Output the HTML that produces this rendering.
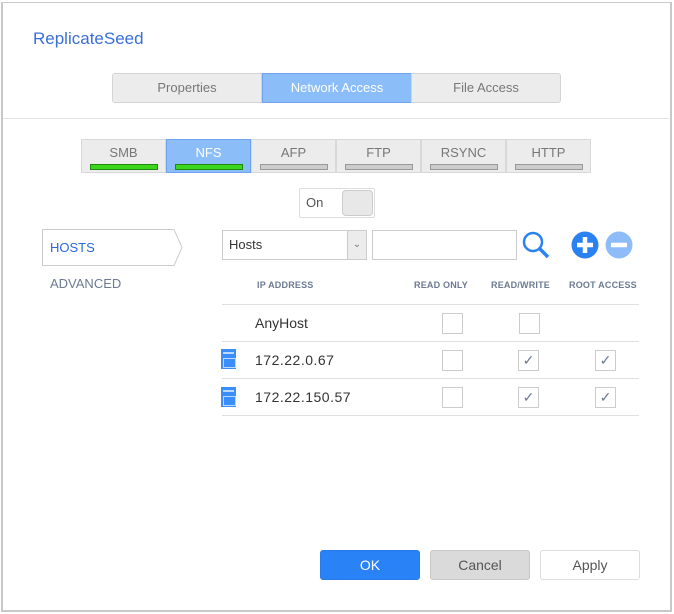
<!DOCTYPE html>
<html><head><style>
*{box-sizing:border-box;margin:0;padding:0}
body{width:674px;height:614px;background:#fff;font-family:"Liberation Sans",sans-serif;position:relative;overflow:hidden}
.a{position:absolute}
.dlg{left:1px;top:2px;width:671px;height:610px;border:2px solid #c8c8c8;border-top:1px solid #ccc;background:#fff}
.tab{top:73px;height:30px;width:150px;background:#ececec;border:1px solid #d4d4d4;color:#777;font-size:13px;text-align:center;line-height:28px}
.pt{top:139px;height:34px;width:85px;background:#ececec;border:1px solid #d8d8d8;color:#777;font-size:13px;text-align:center;line-height:26px}
.pt i{position:absolute;left:8px;top:24px;width:68px;height:6px;background:#ccc;border:1px solid #999}
.pt i.g{background:#3cd61c;border-color:#208a10}
.sel{background:#8bbdf9;color:#fff;border-color:#6fa3ee}
.hd{top:280px;font-size:9px;color:#6c7a92;font-weight:bold;letter-spacing:.2px}
.ln{left:222px;width:417px;height:1px;background:#e0e0e0}
.cb{width:21px;height:21px;border:1px solid #ccc;background:#fff;color:#6c7a92;font-size:14px;text-align:center;line-height:19px}
.ip{left:255px;font-size:14px;color:#333;letter-spacing:.5px}
.srv{left:221px;width:15px;height:20px;background:#3b8ef7}
.srv:before{content:"";position:absolute;left:2px;top:3px;width:11px;height:2px;background:#bcd9ff}
.srv:after{content:"";position:absolute;left:2px;top:9px;width:11px;height:8px;border:1px solid #bcd9ff}
.btn{top:550px;width:100px;height:30px;border-radius:3px;font-size:14px;text-align:center;line-height:28px}
</style></head><body>
<div class="a dlg"></div>
<div class="a" style="left:33px;top:29px;font-size:17px;color:#3a6fd8">ReplicateSeed</div>
<div class="a tab" style="left:112px;border-radius:3px 0 0 3px">Properties</div>
<div class="a tab sel" style="left:262px">Network Access</div>
<div class="a tab" style="left:411px;border-radius:0 3px 3px 0">File Access</div>
<div class="a" style="left:3px;top:118px;width:666px;height:1px;background:#e2e2e2"></div>

<div class="a pt" style="left:81px">SMB<i class="g"></i></div>
<div class="a pt sel" style="left:166px">NFS<i class="g"></i></div>
<div class="a pt" style="left:251px">AFP<i></i></div>
<div class="a pt" style="left:336px">FTP<i></i></div>
<div class="a pt" style="left:421px">RSYNC<i></i></div>
<div class="a pt" style="left:506px">HTTP<i></i></div>

<div class="a" style="left:299px;top:188px;width:76px;height:30px;border:1px solid #ddd;border-radius:2px;background:#fff;font-size:13px;color:#555;padding:6px 0 0 6px">On</div>
<div class="a" style="left:342px;top:190px;width:31px;height:26px;background:#e8e8e8;border:1px solid #ccc;border-radius:4px"></div>

<svg class="a" style="left:42px;top:229px" width="142" height="38"><path d="M0.5 0.5H132L140 18.5L132 36.5H0.5Z" fill="#fff" stroke="#ccc"/></svg>
<div class="a" style="left:50px;top:240px;font-size:13px;color:#2a6ad8">HOSTS</div>
<div class="a" style="left:50px;top:276px;font-size:13px;color:#6c7a92">ADVANCED</div>

<div class="a" style="left:222px;top:230px;width:145px;height:30px;border:1px solid #ccc;font-size:13px;color:#333;padding:6px 0 0 6px">Hosts</div>
<div class="a" style="left:347px;top:231px;width:19px;height:28px;background:#ececec;border-left:1px solid #ccc;color:#777;font-size:10px;text-align:center;line-height:28px">&#8964;</div>
<div class="a" style="left:372px;top:230px;width:145px;height:30px;border:1px solid #ccc"></div>
<svg class="a" style="left:521px;top:230px" width="32" height="30"><circle cx="12" cy="12" r="9" fill="none" stroke="#2a82f2" stroke-width="2.5"/><path d="M18.5 18.5L27 27" stroke="#2a82f2" stroke-width="3.5"/></svg>
<svg class="a" style="left:571px;top:231px" width="64" height="28"><circle cx="14" cy="14" r="13.5" fill="#2a82f2"/><path d="M14 6v16M6 14h16" stroke="#fff" stroke-width="4.5"/><circle cx="48" cy="14" r="13.5" fill="#8ebcf8"/><path d="M40 14h16" stroke="#fff" stroke-width="4.5"/></svg>

<div class="a hd" style="left:257px">IP ADDRESS</div>
<div class="a hd" style="left:414px">READ ONLY</div>
<div class="a hd" style="left:491px">READ/WRITE</div>
<div class="a hd" style="left:569px">ROOT ACCESS</div>
<div class="a ln" style="top:304px"></div>
<div class="a ln" style="top:341px"></div>
<div class="a ln" style="top:378px"></div>
<div class="a ln" style="top:415px"></div>

<div class="a ip" style="top:315px;letter-spacing:0">AnyHost</div>
<div class="a cb" style="left:442px;top:313px"></div>
<div class="a cb" style="left:519px;top:313px"></div>

<div class="a srv" style="top:349px"></div>
<div class="a ip" style="top:352px">172.22.0.67</div>
<div class="a cb" style="left:442px;top:350px"></div>
<div class="a cb" style="left:518px;top:350px">&#10003;</div>
<div class="a cb" style="left:595px;top:350px">&#10003;</div>

<div class="a srv" style="top:387px"></div>
<div class="a ip" style="top:389px">172.22.150.57</div>
<div class="a cb" style="left:442px;top:387px"></div>
<div class="a cb" style="left:518px;top:387px">&#10003;</div>
<div class="a cb" style="left:595px;top:387px">&#10003;</div>

<div class="a btn" style="left:320px;background:#2a82f7;color:#fff;border:1px solid #2a7aea">OK</div>
<div class="a btn" style="left:430px;background:#dadada;color:#555;border:1px solid #c8c8c8">Cancel</div>
<div class="a btn" style="left:540px;background:#fff;color:#555;border:1px solid #ddd">Apply</div>
</body></html>
